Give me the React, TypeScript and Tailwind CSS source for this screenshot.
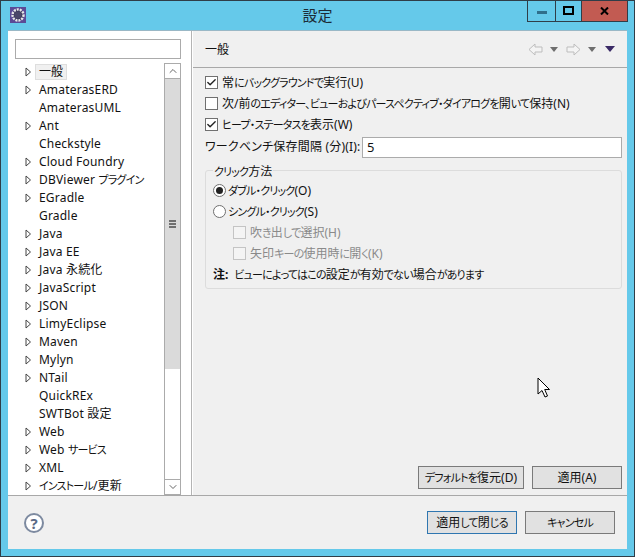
import { ChevronDown, ChevronUp, Check } from 'lucide-react'

const items: [string, boolean][] = [
  ['AmaterasERD', true],
  ['AmaterasUML', false],
  ['Ant', true],
  ['Checkstyle', false],
  ['Cloud Foundry', true],
  ['DBViewer プラグイン', true],
  ['EGradle', true],
  ['Gradle', false],
  ['Java', true],
  ['Java EE', true],
  ['Java 永続化', true],
  ['JavaScript', true],
  ['JSON', true],
  ['LimyEclipse', true],
  ['Maven', true],
  ['Mylyn', true],
  ['NTail', true],
  ['QuickREx', false],
  ['SWTBot 設定', false],
  ['Web', true],
  ['Web サービス', true],
  ['XML', true],
  ['インストール/更新', true],
]

// the kana in the picture are set much narrower than the kanji
function Jp({ text }: { text: string }) {
  return (
    <span className="whitespace-nowrap">
      {text.split(/([ぁ-んァ-ヶー・、]+)/).map((part, i) =>
        i % 2 === 1 ? (
          <span key={i} className="text-[11px] tracking-[-0.8px]">{part}</span>
        ) : (
          <span key={i}>{part}</span>
        ),
      )}
    </span>
  )
}

function Twisty() {
  return (
    <svg width="7" height="10" viewBox="0 0 7 10" className="shrink-0">
      <path d="M1 1 L1 9 L5.5 5 Z" fill="#fff" stroke="#444" strokeWidth="1" />
    </svg>
  )
}

function Box({ checked, disabled }: { checked?: boolean; disabled?: boolean }) {
  return (
    <span className={`flex h-[13px] w-[13px] shrink-0 items-center justify-center border ${disabled ? 'border-[#c4c4c4] bg-[#f4f4f4]' : 'border-[#707070] bg-white'}`}>
      {checked && <Check size={11} strokeWidth={3} className="text-[#222]" />}
    </span>
  )
}

function Radio({ checked }: { checked?: boolean }) {
  return (
    <span className="flex h-[13px] w-[13px] shrink-0 items-center justify-center rounded-full border border-[#707070] bg-white">
      {checked && <span className="h-[7px] w-[7px] rounded-full bg-[#222]" />}
    </span>
  )
}

function Arrow({ flip }: { flip?: boolean }) {
  return (
    <svg width="15" height="13" viewBox="0 0 15 13" className={flip ? '-scale-x-100' : ''}>
      <path d="M1 6.5 L7 1 L7 4 L14 4 L14 9 L7 9 L7 12 Z" fill="#f4f4f4" stroke="#bdbdbd" strokeWidth="1" />
    </svg>
  )
}

function Caret({ dark }: { dark?: boolean }) {
  return (
    <svg width={dark ? 10 : 8} height={dark ? 6 : 5} viewBox="0 0 8 5" preserveAspectRatio="none">
      <path d="M0 0 H8 L4 5 Z" fill={dark ? '#3a2a66' : '#6e6e6e'} />
    </svg>
  )
}

function Btn({ label, w, focus }: { label: string; w: string; focus?: boolean }) {
  return (
    <button className={`flex h-[23px] items-center justify-center whitespace-nowrap border bg-[#e1e1e1] text-[12px] text-[#111] ${w} ${focus ? 'border-[#2f76b0]' : 'border-[#7a7a7a]'}`}>
      <Jp text={label} />
    </button>
  )
}

export default function App() {
  return (
    <div
      className="relative flex h-[557px] w-[635px] flex-col overflow-hidden border border-[#2f3d48] bg-[#65c9ea] text-[12px] leading-[18px] text-[#111] [font-feature-settings:'palt']"
      style={{ fontFamily: '"Noto Sans", "Noto Sans CJK JP", sans-serif' }}
    >
      {/* title bar */}
      <div className="relative flex h-[29px] shrink-0 items-center justify-center">
        <svg width="16" height="16" viewBox="0 0 16 16" className="absolute left-[9px] top-[6px]">
          <rect width="16" height="16" fill="#5b4a96" />
          <circle cx="8" cy="8" r="5.5" fill="#3e3a5c" stroke="#e8e8e8" strokeWidth="2.4" strokeDasharray="2 1" />
          <circle cx="8" cy="8" r="3.6" fill="#4a4668" />
        </svg>
        <span className="-mt-[2px] text-[15px] text-[#1c2b36] [font-feature-settings:'normal']">設定</span>
        <div className="absolute right-[6px] top-[-1px] flex h-[22px] border border-t-0 border-[#2f3d48]">
          <div className="flex w-[28px] items-center justify-center border-r border-[#2f3d48]">
            <span className="mt-[3px] h-[3px] w-[10px] bg-[#2f6f8c]" />
          </div>
          <div className="flex w-[26px] items-center justify-center border-r border-[#2f3d48]">
            <span className="h-[9px] w-[11px] border-2 border-black" />
          </div>
          <div className="flex w-[45px] items-center justify-center bg-[#c25b52]">
            <svg width="9" height="8" viewBox="0 0 9 8">
              <path d="M1 0.5 L8 7.5 M8 0.5 L1 7.5" stroke="#000" strokeWidth="2" />
            </svg>
          </div>
        </div>
      </div>

      {/* body */}
      <div className="mx-[7px] flex h-[519px] flex-col border-t border-[#9ab8c6] bg-[#f0f0f0]">
        <div className="flex h-[465px] border-b border-[#a8a8a8]">
          {/* left tree */}
          <div className="flex w-[183px] shrink-0 flex-col bg-white pl-[7px] pr-[10px] pt-[8px]">
            <div className="h-[20px] shrink-0 border border-[#ababab] bg-white" />
            <div className="mt-[4px] flex min-h-0 flex-1">
              <div className="flex-1 overflow-hidden pl-[10px]">
                <div className="flex h-[18px] items-center gap-[3px]">
                  <Twisty />
                  <span className="border border-[#dedede] bg-[#f0f0f0] px-[3px] text-[12px] leading-[14px]">一般</span>
                </div>
                {items.map(([label, arrow]) => (
                  <div key={label} className="flex h-[18px] items-center gap-[7px] whitespace-nowrap tracking-[0.2px]">
                    {arrow ? <Twisty /> : <span className="w-[7px] shrink-0" />}
                    <Jp text={label} />
                  </div>
                ))}
              </div>
              {/* scrollbar */}
              <div className="flex w-[17px] shrink-0 flex-col border-x border-[#ababab] bg-white">
                <div className="flex h-[16px] shrink-0 items-center justify-center border-y border-[#ababab]">
                  <ChevronUp size={12} className="text-[#666]" />
                </div>
                <div className="flex h-[290px] shrink-0 items-center justify-center bg-[#dadada]">
                  <div className="flex flex-col gap-[1px]">
                    <span className="h-[2px] w-[7px] bg-[#707070]" />
                    <span className="h-[2px] w-[7px] bg-[#707070]" />
                    <span className="h-[2px] w-[7px] bg-[#707070]" />
                  </div>
                </div>
                <div className="flex-1" />
                <div className="flex h-[16px] shrink-0 items-center justify-center border-y border-[#ababab]">
                  <ChevronDown size={12} className="text-[#666]" />
                </div>
              </div>
            </div>
          </div>

          {/* sash */}
          <div className="w-[2px] shrink-0 border-l border-[#b4b4b4] bg-white" />

          {/* right panel */}
          <div className="flex min-w-0 flex-1 flex-col">
            <div className="flex h-[37px] shrink-0 items-center justify-between border-b border-[#a8a8a8] pl-[12px] pr-[12px]">
              <span className="mt-[2px]">一般</span>
              <div className="flex items-center">
                <Arrow />
                <span className="ml-[7px] flex"><Caret /></span>
                <span className="ml-[8px] flex"><Arrow flip /></span>
                <span className="ml-[7px] flex"><Caret /></span>
                <span className="ml-[9px] flex"><Caret dark /></span>
              </div>
            </div>
            <div className="flex flex-1 flex-col pl-[12px] pr-[5px] pt-[4px]">
              <div className="flex h-[21px] items-center gap-[4px]"><Box checked /><Jp text="常にバックグラウンドで実行(U)" /></div>
              <div className="flex h-[21px] items-center gap-[4px]"><Box /><Jp text="次/前のエディター、ビューおよびパースペクティブ・ダイアログを開いて保持(N)" /></div>
              <div className="flex h-[21px] items-center gap-[4px]"><Box checked /><Jp text="ヒープ・ステータスを表示(W)" /></div>
              <div className="mt-[1px] flex h-[22px] items-center">
                <span className="w-[157px] shrink-0 whitespace-nowrap tracking-[0.2px]">ワークベンチ保存間隔 (分)(I):</span>
                <div className="flex h-[21px] flex-1 items-center border border-[#ababab] bg-white pl-[4px] text-[13px]">5</div>
              </div>

              <div className="relative mt-[12px] h-[119px] rounded-[3px] border border-[#dcdcdc] pl-[7px] pt-[9px]">
                <span className="absolute -top-[8px] left-[7px] bg-[#f0f0f0] px-[1px]"><Jp text="クリック方法" /></span>
                <div className="flex h-[21px] items-center gap-[2px]"><Radio checked /><Jp text="ダブル・クリック(O)" /></div>
                <div className="flex h-[21px] items-center gap-[2px]"><Radio /><Jp text="シングル・クリック(S)" /></div>
                <div className="flex h-[21px] items-center gap-[4px] pl-[20px] text-[#8a8a8a]"><Box disabled /><Jp text="吹き出しで選択(H)" /></div>
                <div className="flex h-[21px] items-center gap-[4px] pl-[20px] text-[#8a8a8a]"><Box disabled /><Jp text="矢印キーの使用時に開く(K)" /></div>
                <div className="flex h-[21px] items-center gap-[6px]"><b className="font-bold">注:</b><Jp text="ビューによってはこの設定が有効でない場合があります" /></div>
              </div>

              <div className="mt-auto mb-[6px] flex justify-end gap-[8px]">
                <Btn label="デフォルトを復元(D)" w="w-[106px]" />
                <Btn label="適用(A)" w="w-[90px]" />
              </div>
            </div>
          </div>
        </div>

        {/* footer */}
        <div className="flex flex-1 items-center justify-between pl-[16px] pr-[12px]">
          <span className="flex h-[20px] w-[20px] items-center justify-center rounded-full border-2 border-[#7d8aa0] bg-white text-[15px] font-bold text-[#5a6a86]">?</span>
          <div className="flex gap-[8px]">
            <Btn label="適用して閉じる" w="w-[90px]" focus />
            <Btn label="キャンセル" w="w-[90px]" />
          </div>
        </div>
      </div>

      {/* mouse pointer */}
      <svg width="14" height="22" viewBox="0 0 14 22" className="absolute left-[536px] top-[376px]">
        <path d="M1 1 L1 17 L5 13.5 L8 20 L10.5 19 L7.7 12.5 L12.5 12.5 Z" fill="#fff" stroke="#000" strokeWidth="1" />
      </svg>
    </div>
  )
}
